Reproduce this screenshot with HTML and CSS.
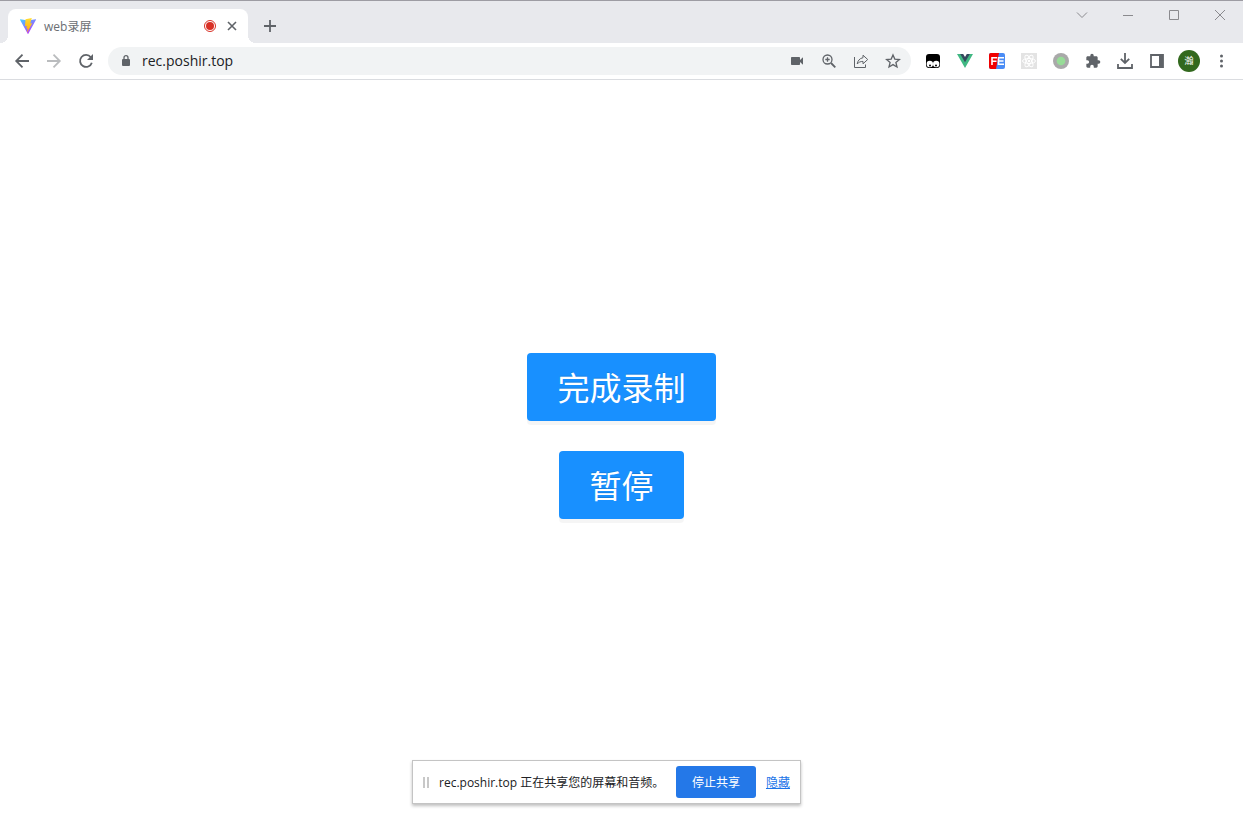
FILE: index.html
```html
<!DOCTYPE html>
<html lang="zh-CN">
<head>
    <meta charset="UTF-8">
    <meta name="viewport" content="width=device-width, initial-scale=1.0">
    <title>web录屏</title>
    <link rel="stylesheet" href="styles.css">
</head>
<body>

<!-- Tab strip -->
<header class="tab-strip">
    <div class="tab">
        <svg class="icon" viewBox="0 0 16 16">
            <defs>
                <linearGradient id="viteBlue" x1="0" y1="0" x2="0.6" y2="1">
                    <stop offset="0" stop-color="#41d1ff"/>
                    <stop offset="1" stop-color="#bd34fe"/>
                </linearGradient>
                <linearGradient id="viteYellow" x1="0" y1="0" x2="0" y2="1">
                    <stop offset="0" stop-color="#ffdd35"/>
                    <stop offset="1" stop-color="#ffa800"/>
                </linearGradient>
            </defs>
            <path fill="url(#viteBlue)" d="M0.3 1.300 8 2.500l7.700-1.200c.3 0 .4.2.3.5L8.300 15.800c-.1.300-.5.300-.6 0L0 1.800z"/>
            <path fill="url(#viteYellow)" d="M11.800 0 5.500 1.200 5 8.200l1.900-.4-.6 3 1.400-.4-.7 4.300 5.200-9.500-2 .3z"/>
        </svg>
        <span class="tab-title">web录屏</span>
        <svg class="icon" viewBox="0 0 16 16">
            <circle cx="8" cy="8" r="5.500" fill="#fff" stroke="#d93025"/>
            <circle cx="8" cy="8" r="4" fill="#d93025"/>
        </svg>
        <button class="tab-close" aria-label="关闭">
            <svg class="icon" viewBox="0 0 16 16"><path class="line" d="m4 4 8 8m0-8-8 8"/></svg>
        </button>
    </div>
    <button class="new-tab" aria-label="新标签页">
        <svg class="icon" viewBox="0 0 16 16"><path class="line" d="M8 2v12M2 8h12"/></svg>
    </button>
    <div class="window-buttons">
        <button aria-label="搜索标签页"><svg class="icon" viewBox="0 0 16 16"><path d="m3 5.500 5 5 5-5"/></svg></button>
        <button aria-label="最小化"><svg class="icon" viewBox="0 0 16 16"><path d="M3 8.500h10"/></svg></button>
        <button aria-label="最大化"><svg class="icon" viewBox="0 0 16 16"><path d="M3.500 3.500h9v9h-9z"/></svg></button>
        <button aria-label="关闭窗口"><svg class="icon" viewBox="0 0 16 16"><path d="m3 3 10 10m0-10L3 13"/></svg></button>
    </div>
</header>

<!-- Toolbar -->
<nav class="toolbar">
    <button class="tool" aria-label="后退">
        <svg class="icon" viewBox="0 0 16 16"><path class="line" d="M15 8H2.500M8.500 1.700 2.200 8l6.300 6.300"/></svg>
    </button>
    <button class="tool forward" aria-label="前进">
        <svg class="icon" viewBox="0 0 16 16"><path class="line" d="M1 8h12.500M7.500 1.700 13.800 8l-6.300 6.300"/></svg>
    </button>
    <button class="tool" aria-label="重新加载">
        <svg class="icon" viewBox="0 0 16 16">
            <path class="line" d="M12.800 4.200A6 6 0 1 0 13.800 9.700"/>
            <path d="M15 1v6H9z"/>
        </svg>
    </button>
    <div class="address-bar">
        <svg class="icon lock" viewBox="0 0 16 16">
            <rect x="4" y="6" width="8" height="7" rx="1"/>
            <path class="thin" d="M6 6.500V4.700a2 2 0 0 1 4 0v1.800"/>
        </svg>
        <input class="address" type="text" value="rec.poshir.top" aria-label="地址">
        <button class="tool" aria-label="摄像头">
            <svg class="icon" viewBox="0 0 16 16"><path d="M2.800 4h7.400c.5 0 .8.300.8.800v2.200L14 4.300v7.400L11 9v2.200c0 .5-.3.800-.8.800H2.800c-.5 0-.8-.3-.8-.8V4.800c0-.5.3-.8.8-.8z"/></svg>
        </button>
        <button class="tool" aria-label="缩放">
            <svg class="icon" viewBox="0 0 16 16">
                <circle class="thin" cx="6.500" cy="6.500" r="4.500"/>
                <path class="thin" d="M6.500 4.300v4.400M4.300 6.500h4.400"/>
                <path class="line" d="m10 10 4.300 4.300"/>
            </svg>
        </button>
        <button class="tool share" aria-label="分享">
            <svg class="icon" viewBox="0 0 16 16">
                <path class="thin" d="M1.500 4v10.500h11v-3"/>
                <path class="thin" d="M10 2.200 14.700 6.500 10 10.800V8.400C7.500 8.400 5.600 9.200 4.200 11c.4-3 2.300-5.700 5.800-6.300z"/>
            </svg>
        </button>
        <button class="tool" aria-label="收藏">
            <svg class="icon" viewBox="0 0 16 16"><path class="thin" d="m8 1.900 1.800 4.200 4.600.4-3.500 3 1.100 4.500-4-2.400L4 14l1.100-4.500-3.500-3 4.600-.4z"/></svg>
        </button>
    </div>
    <div class="extensions">
        <button class="tool" aria-label="Tampermonkey">
            <svg class="icon" viewBox="0 0 16 16">
                <rect x="1" y="1" width="14" height="14" rx="3" fill="#000"/>
                <circle cx="4.800" cy="11" r="3.200" fill="#fff"/>
                <circle cx="11.200" cy="11" r="3.200" fill="#fff"/>
                <circle cx="5" cy="12.500" r="1" fill="#000"/>
                <circle cx="11" cy="12.500" r="1" fill="#000"/>
            </svg>
        </button>
        <button class="tool" aria-label="Vue">
            <svg class="icon" viewBox="0 0 16 16">
                <path fill="#41b883" d="M0 1h5l3 5 3-5h5L8 15z"/>
                <path fill="#35495e" d="M3.200 1H6.200L8 4l1.800-3h3L8 9.300z"/>
            </svg>
        </button>
        <button class="tool" aria-label="FeHelper">
            <svg class="icon" viewBox="0 0 16 16">
                <rect width="16" height="16" rx="2" fill="#4a8cf5"/>
                <path fill="#f00000" d="M2 0h8L7 16H2a2 2 0 0 1-2-2V2a2 2 0 0 1 2-2z"/>
                <path fill="none" stroke="#fff" stroke-width="1.600" d="M8 4.800H3V12M3 8.300h4.500M15 4.800H9.500v6.400H15M9.500 8h5"/>
            </svg>
        </button>
        <button class="tool" aria-label="React">
            <svg class="icon" viewBox="0 0 16 16">
                <rect width="16" height="16" fill="#e3e3e3"/>
                <g fill="none" stroke="#fff">
                    <ellipse cx="8" cy="8" rx="6.500" ry="2.500"/>
                    <ellipse cx="8" cy="8" rx="6.500" ry="2.500" transform="rotate(60 8 8)"/>
                    <ellipse cx="8" cy="8" rx="6.500" ry="2.500" transform="rotate(120 8 8)"/>
                </g>
                <circle cx="8" cy="8" r="1.200" fill="#fff"/>
            </svg>
        </button>
        <button class="tool" aria-label="扩展状态">
            <svg class="icon" viewBox="0 0 16 16">
                <circle cx="8" cy="8" r="8" fill="#a9a9a9"/>
                <circle cx="8" cy="8" r="4.300" fill="#97dc97"/>
            </svg>
        </button>
        <button class="tool" aria-label="扩展程序">
            <svg class="icon" viewBox="0 0 24 24"><path d="M20.500 11H19V7c0-1.100-.9-2-2-2h-4V3.500a2.500 2.500 0 0 0-5 0V5H4c-1.100 0-2 .9-2 2v3.800h1.500a2.700 2.700 0 0 1 0 5.400H2V20c0 1.100.9 2 2 2h3.800v-1.500a2.700 2.700 0 0 1 5.400 0V22H17c1.100 0 2-.9 2-2v-4h1.500a2.500 2.500 0 0 0 0-5z"/></svg>
        </button>
        <button class="tool" aria-label="下载">
            <svg class="icon" viewBox="0 0 16 16"><path class="line" d="M8 0v9.500M3.800 5.800 8 10l4.200-4.200M1 11v4h14v-4"/></svg>
        </button>
        <button class="tool" aria-label="侧边栏">
            <svg class="icon" viewBox="0 0 16 16">
                <path class="line" d="M2 2h12v12H2z"/>
                <path d="M10 2h4v12h-4z"/>
            </svg>
        </button>
        <button class="tool" aria-label="个人资料"><span class="avatar">瀚</span></button>
        <button class="tool" aria-label="菜单">
            <svg class="icon" viewBox="0 0 16 16">
                <circle cx="8.500" cy="3" r="1.500"/>
                <circle cx="8.500" cy="8" r="1.500"/>
                <circle cx="8.500" cy="13" r="1.500"/>
            </svg>
        </button>
    </div>
</nav>

<!-- Page content -->
<main class="page">
    <button class="record-button">完成录制</button>
    <button class="record-button">暂停</button>
</main>

<!-- Screen share notice -->
<div class="share-bar">
    <span class="grip"></span>
    <span class="share-text">rec.poshir.top 正在共享您的屏幕和音频。</span>
    <button class="stop-button">停止共享</button>
    <a class="hide-link" href="#">隐藏</a>
</div>

</body>
</html>
```
FILE: styles.css
```css
* {
    box-sizing: border-box;
}
body {
    display: flex;
    flex-direction: column;
    min-height: 100vh;
    margin: 0;
    background-color: #fff;
    font-family: "Open Sans", "Noto Sans CJK SC", sans-serif;
    font-size: 12px;
}
button {
    display: flex;
    align-items: center;
    justify-content: center;
    padding: 0;
    border: none;
    background: none;
    font-family: inherit;
    cursor: pointer;
}
.icon {
    width: 16px;
    height: 16px;
    flex: none;
    fill: #5f6368;
}
.line,
.thin {
    fill: none;
    stroke: #5f6368;
    stroke-width: 1.8;
}
.thin {
    stroke-width: 1.3;
}
.share .thin {
    stroke-width: 1;
}

/* Tab strip */
.tab-strip {
    display: flex;
    align-items: flex-end;
    height: 43px;
    padding-left: 8px;
    border-top: 1px solid #9d9ca3;
    background-color: #e8e9ed;
}
.tab {
    position: relative;
    display: flex;
    align-items: center;
    width: 240px;
    height: 34px;
    padding: 0 8px 0 12px;
    border-radius: 8px 8px 0 0;
    background-color: #fff;
}
/* curved feet on both sides of the tab */
.tab::before,
.tab::after {
    content: "";
    position: absolute;
    bottom: 0;
    width: 8px;
    height: 8px;
}
.tab::before {
    left: -8px;
    background: radial-gradient(circle at 0 0, transparent 8px, #fff 8px);
}
.tab::after {
    right: -8px;
    background: radial-gradient(circle at 100% 0, transparent 8px, #fff 8px);
}
.tab-title {
    flex: 1;
    margin-left: 8px;
    color: #6b6e73;
}
.tab-close {
    margin-left: 6px;
}
.tab-close .line {
    stroke-width: 1.6;
}
.new-tab {
    width: 28px;
    height: 34px;
    margin-left: 8px;
}
.window-buttons {
    display: flex;
    align-self: flex-start;
    margin-left: auto;
}
.window-buttons button {
    width: 46px;
    height: 28px;
}
.window-buttons path {
    fill: none;
    stroke: #8a8a8e;
}

/* Toolbar */
.toolbar {
    display: flex;
    align-items: center;
    height: 37px;
    padding: 0 6px;
    border-bottom: 1px solid #dadce0;
}
.tool {
    width: 32px;
    height: 28px;
    flex: none;
}
.forward .line {
    stroke: #babcbe;
}
.address-bar {
    display: flex;
    align-items: center;
    flex: 1;
    height: 28px;
    margin: 0 6px;
    padding: 0 2px 0 10px;
    border-radius: 14px;
    background-color: #f1f3f4;
}
.address {
    flex: 1;
    min-width: 0;
    margin-left: 8px;
    padding: 0 0 2px;
    border: none;
    outline: none;
    background: none;
    color: #202124;
    font-family: inherit;
    font-size: 14px;
}
.extensions {
    display: flex;
}
.avatar {
    width: 22px;
    height: 22px;
    border-radius: 50%;
    background-color: #33691e;
    color: #fff;
    font-size: 9px;
    line-height: 22px;
    text-align: center;
}

/* Page content */
.page {
    display: flex;
    flex: 1;
    flex-direction: column;
    align-items: center;
    justify-content: center;
}
.record-button {
    height: 68px;
    margin-bottom: 30px;
    padding: 0 30px 2px;
    border-radius: 4px;
    background-color: #1890ff;
    box-shadow: 0 4px 0 rgba(0, 0, 0, 0.04);
    color: #fff;
    font-size: 32px;
    text-shadow: 0 -1px 0 rgba(0, 0, 0, 0.12);
}

/* Screen share notice */
.share-bar {
    position: absolute;
    bottom: 17px;
    left: 412px;
    display: flex;
    align-items: center;
    width: 389px;
    height: 44px;
    padding: 0 10px;
    border: 1px solid #c4c4c4;
    background-color: #fff;
    box-shadow: 0 2px 3px rgba(0, 0, 0, 0.25);
    white-space: nowrap;
}
.grip {
    width: 6px;
    height: 11px;
    border: solid #c8c8c8;
    border-width: 0 2px;
}
.share-text {
    flex: 1;
    margin-left: 10px;
    color: #202124;
}
.stop-button {
    width: 80px;
    height: 32px;
    border-radius: 3px;
    background-color: #2478e8;
    color: #fff;
    font-size: 12px;
}
.hide-link {
    margin-left: 10px;
    color: #1a73e8;
}
```
